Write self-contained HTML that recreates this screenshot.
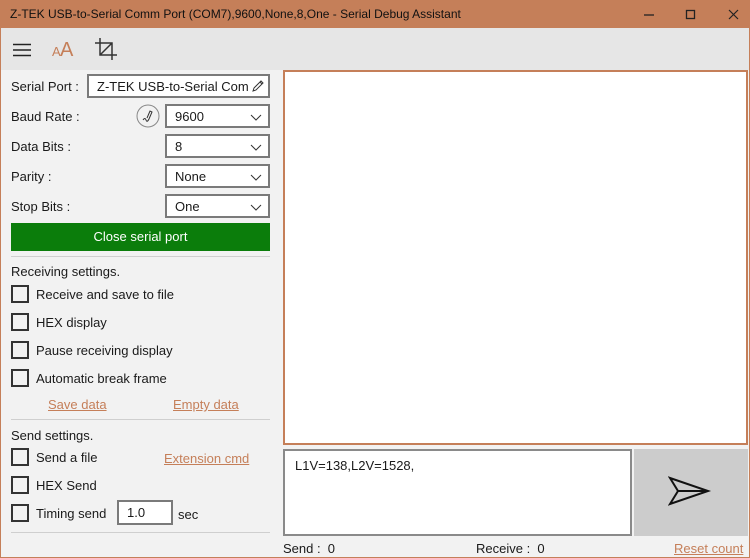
<!DOCTYPE html>
<html><head><meta charset="utf-8"><style>
*{margin:0;padding:0;box-sizing:border-box}
body{width:750px;height:558px;overflow:hidden;background:#f2f2f2;font-family:"Liberation Sans",sans-serif;font-size:13px;color:#1a1a1a;position:relative}
.a{position:absolute}
.win{left:0;top:0;width:750px;height:558px;border:1px solid #c57f59;border-top:none}
.title{left:0;top:0;width:750px;height:28px;background:#c57f59;color:#111;font-size:12px;line-height:28px;padding-left:10px}
.tool{left:1px;top:28px;width:748px;height:42px;background:#e6e6e6}
.lbl{line-height:16px}
.box{border:2px solid #7a7a7a;background:#fff;height:24px;line-height:21px;padding-left:8px;font-size:13px}
.combo{left:165px;width:105px}
.chev{position:absolute;right:6px;top:6px}
.cb{width:18px;height:18px;border:2px solid #333;left:11px}
.sep{left:11px;width:259px;height:1px;background:#cfcfcf}
.link{color:#c57f59;text-decoration:underline;line-height:16px}
</style></head><body>
<div class="a win"></div>
<div class="a title">Z-TEK USB-to-Serial Comm Port (COM7),9600,None,8,One - Serial Debug Assistant</div>
<svg class="a" style="left:636px;top:8px" width="110" height="14"><line x1="8" y1="7" x2="18" y2="7" stroke="#222" stroke-width="1.3"/><rect x="50.5" y="2.5" width="8" height="8" fill="none" stroke="#222" stroke-width="1.3"/><path d="M93 2L102 11M102 2L93 11" stroke="#222" stroke-width="1.2"/></svg>
<div class="a tool"></div>
<svg class="a" style="left:12px;top:42px" width="20" height="16"><path d="M1 2.5H19M1 8H19M1 13.5H19" stroke="#222" stroke-width="1.5"/></svg>
<svg class="a" style="left:52px;top:36px" width="26" height="24"><text x="0" y="20" font-family="Liberation Sans" font-size="13" fill="#c57f59">A</text><text x="8" y="20" font-family="Liberation Sans" font-size="20" fill="#c57f59">A</text></svg>
<svg class="a" style="left:95px;top:38px" width="22" height="22"><path d="M5 0V17H22M0 5H17V22M5 17L17 5" stroke="#333" stroke-width="1.5" fill="none"/></svg>

<div class="a lbl" style="left:11px;top:79px">Serial Port :</div>
<div class="a box" style="left:87px;top:74px;width:183px"><span style="display:block;width:152px;overflow:hidden;white-space:nowrap">Z-TEK USB-to-Serial Comm F</span><svg class="chev" style="right:3px;top:3px" width="15" height="15"><path d="M3 12L4 9L11 2L13 4L6 11ZM10 3L12 5" stroke="#333" fill="none"/></svg></div>

<div class="a lbl" style="left:11px;top:109px">Baud Rate :</div>
<svg class="a" style="left:136px;top:104px" width="24" height="24"><circle cx="12" cy="12" r="11" fill="none" stroke="#888"/><path d="M7 16Q9 13 10 16T13 15L16 8L14 7L11 14" stroke="#333" fill="none"/></svg>
<div class="a box combo" style="top:104px">9600<svg class="chev" width="12" height="10"><path d="M1 3L6 8L11 3" stroke="#333" fill="none"/></svg></div>
<div class="a lbl" style="left:11px;top:139px">Data Bits :</div>
<div class="a box combo" style="top:134px">8<svg class="chev" width="12" height="10"><path d="M1 3L6 8L11 3" stroke="#333" fill="none"/></svg></div>
<div class="a lbl" style="left:11px;top:169px">Parity :</div>
<div class="a box combo" style="top:164px">None<svg class="chev" width="12" height="10"><path d="M1 3L6 8L11 3" stroke="#333" fill="none"/></svg></div>
<div class="a lbl" style="left:11px;top:199px">Stop Bits :</div>
<div class="a box combo" style="top:194px">One<svg class="chev" width="12" height="10"><path d="M1 3L6 8L11 3" stroke="#333" fill="none"/></svg></div>

<div class="a" style="left:11px;top:223px;width:259px;height:28px;background:#0b7d0b;color:#fff;text-align:center;line-height:28px;font-size:13px">Close serial port</div>
<div class="a sep" style="top:256px"></div>
<div class="a lbl" style="left:11px;top:264px">Receiving settings.</div>
<div class="a cb" style="top:285px"></div><div class="a lbl" style="left:36px;top:287px">Receive and save to file</div>
<div class="a cb" style="top:313px"></div><div class="a lbl" style="left:36px;top:315px">HEX display</div>
<div class="a cb" style="top:341px"></div><div class="a lbl" style="left:36px;top:343px">Pause receiving display</div>
<div class="a cb" style="top:369px"></div><div class="a lbl" style="left:36px;top:371px">Automatic break frame</div>
<div class="a link" style="left:48px;top:397px">Save data</div>
<div class="a link" style="left:173px;top:397px">Empty data</div>
<div class="a sep" style="top:419px"></div>
<div class="a lbl" style="left:11px;top:428px">Send settings.</div>
<div class="a cb" style="top:448px"></div><div class="a lbl" style="left:36px;top:450px">Send a file</div>
<div class="a link" style="left:164px;top:451px">Extension cmd</div>
<div class="a cb" style="top:476px"></div><div class="a lbl" style="left:36px;top:478px">HEX Send</div>
<div class="a cb" style="top:504px"></div><div class="a lbl" style="left:36px;top:506px">Timing send</div>
<div class="a box" style="left:117px;top:500px;width:56px;height:25px;line-height:22px">1.0</div>
<div class="a lbl" style="left:178px;top:507px">sec</div>
<div class="a sep" style="top:532px"></div>

<div class="a" style="left:283px;top:70px;width:465px;height:375px;border:2px solid #c57f59;background:#fff"></div>
<div class="a" style="left:283px;top:449px;width:349px;height:87px;border:2px solid #8a8a8a;background:#fff;padding:7px 0 0 10px;font-size:13px">L1V=138,L2V=1528,</div>
<div class="a" style="left:634px;top:449px;width:114px;height:87px;background:#cccccc"></div>
<svg class="a" style="left:668px;top:476px" width="44" height="30"><path d="M2 2L40 15L2 28L10 15Z M10 15H40" stroke="#111" stroke-width="2" fill="none"/></svg>
<div class="a lbl" style="left:283px;top:541px">Send :&nbsp; 0</div>
<div class="a lbl" style="left:476px;top:541px">Receive :&nbsp; 0</div>
<div class="a link" style="left:674px;top:541px">Reset count</div>
</body></html>
